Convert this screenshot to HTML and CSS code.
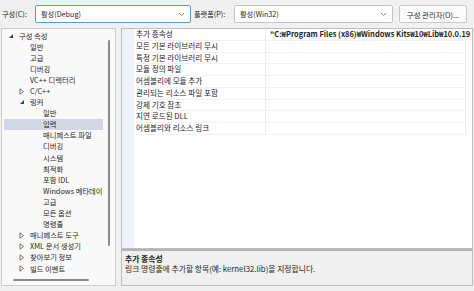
FILE: index.html
```html
<!DOCTYPE html>
<html>
    <head>
        <meta charset="utf-8">
        <link rel="stylesheet" href="styles.css">
        <title>속성 페이지</title>
    </head>
    <body>
        <div class="topbar">
            <span class="label cfg">구성(C):</span>
            <div class="combo focus combo-cfg">
                <span>활성(Debug)</span>
                <svg class="chev" width="7" height="5" viewBox="0 0 7 5"><path d="M1 1 L3.5 3.5 L6 1" fill="none" stroke="#777" stroke-width="0.9"/></svg>
            </div>
            <span class="label plat">플랫폼(P):</span>
            <div class="combo combo-plat">
                <span>활성(Win32)</span>
                <svg class="chev" width="7" height="5" viewBox="0 0 7 5"><path d="M1 1 L3.5 3.5 L6 1" fill="none" stroke="#777" stroke-width="0.9"/></svg>
            </div>
            <button class="btn">구성 관리자(O)...</button>
        </div>

        <div class="main">
            <div class="tree">
                <div class="item l0"><span class="arr"><svg width="6" height="6" viewBox="0 0 6 6"><polygon points="5,1 5,5 1,5" fill="#404040"/></svg></span>구성 속성</div>
                <div class="item l1"><span class="arr"></span>일반</div>
                <div class="item l1"><span class="arr"></span>고급</div>
                <div class="item l1"><span class="arr"></span>디버깅</div>
                <div class="item l1"><span class="arr"></span>VC++ 디렉터리</div>
                <div class="item l1"><span class="arr"><svg width="6" height="7" viewBox="0 0 6 7"><polygon points="1,0.8 4.6,3.5 1,6.2" fill="none" stroke="#555" stroke-width="0.8"/></svg></span>C/C++</div>
                <div class="item l1"><span class="arr"><svg width="6" height="6" viewBox="0 0 6 6"><polygon points="5,1 5,5 1,5" fill="#404040"/></svg></span>링커</div>
                <div class="item l2"><span class="arr"></span>일반</div>
                <div class="item l2 selected"><span class="arr"></span>입력</div>
                <div class="item l2"><span class="arr"></span>매니페스트 파일</div>
                <div class="item l2"><span class="arr"></span>디버깅</div>
                <div class="item l2"><span class="arr"></span>시스템</div>
                <div class="item l2"><span class="arr"></span>최적화</div>
                <div class="item l2"><span class="arr"></span>포함 IDL</div>
                <div class="item l2"><span class="arr"></span>Windows 메타데이</div>
                <div class="item l2"><span class="arr"></span>고급</div>
                <div class="item l2"><span class="arr"></span>모든 옵션</div>
                <div class="item l2"><span class="arr"></span>명령줄</div>
                <div class="item l1"><span class="arr"><svg width="6" height="7" viewBox="0 0 6 7"><polygon points="1,0.8 4.6,3.5 1,6.2" fill="none" stroke="#555" stroke-width="0.8"/></svg></span>매니페스트 도구</div>
                <div class="item l1"><span class="arr"><svg width="6" height="7" viewBox="0 0 6 7"><polygon points="1,0.8 4.6,3.5 1,6.2" fill="none" stroke="#555" stroke-width="0.8"/></svg></span>XML 문서 생성기</div>
                <div class="item l1"><span class="arr"><svg width="6" height="7" viewBox="0 0 6 7"><polygon points="1,0.8 4.6,3.5 1,6.2" fill="none" stroke="#555" stroke-width="0.8"/></svg></span>찾아보기 정보</div>
                <div class="item l1"><span class="arr"><svg width="6" height="7" viewBox="0 0 6 7"><polygon points="1,0.8 4.6,3.5 1,6.2" fill="none" stroke="#555" stroke-width="0.8"/></svg></span>빌드 이벤트</div>
                <div class="vscroll"></div>
                <div class="hscroll"></div>
            </div>

            <div class="right">
                <div class="grid">
                    <div class="margin"></div>
                    <div class="rows">
                        <div class="row first">
                            <div class="name">추가 종속성</div>
                            <div class="value bold">"C:₩Program Files (x86)₩Windows Kits₩10₩Lib₩10.0.19</div>
                        </div>
                        <div class="row"><div class="name">모든 기본 라이브러리 무시</div><div class="value"></div></div>
                        <div class="row"><div class="name">특정 기본 라이브러리 무시</div><div class="value"></div></div>
                        <div class="row"><div class="name">모듈 정의 파일</div><div class="value"></div></div>
                        <div class="row"><div class="name">어셈블리에 모듈 추가</div><div class="value"></div></div>
                        <div class="row"><div class="name">관리되는 리소스 파일 포함</div><div class="value"></div></div>
                        <div class="row"><div class="name">강제 기호 참조</div><div class="value"></div></div>
                        <div class="row"><div class="name">지연 로드된 DLL</div><div class="value"></div></div>
                        <div class="row"><div class="name">어셈블리와 리소스 링크</div><div class="value"></div></div>
                    </div>
                </div>
                <div class="desc">
                    <div class="desc-title">추가 종속성</div>
                    <div class="desc-text">링크 명령줄에 추가할 항목(예: kernel32.lib)을 지정합니다.</div>
                </div>
            </div>
        </div>
    </body>
</html>
```

FILE: styles.css
```css
body {
    margin: 0;
    background-color: #f0f0f0;
    color: #1e1e1e;
    font-family: "Noto Sans CJK KR", "Noto Sans", sans-serif;
    font-size: 7.2px;
    width: 474px;
    height: 291px;
    overflow: hidden;
}
.topbar {
    display: flex;
    align-items: center;
    height: 28px;
    padding-left: 2px;
    box-sizing: border-box;
}
.label {
    white-space: nowrap;
}
.label.cfg {
    width: 33px;
}
.label.plat {
    width: 40px;
}
.combo {
    display: flex;
    align-items: center;
    justify-content: space-between;
    height: 18px;
    box-sizing: border-box;
    padding: 0 5px 0 5px;
    background-color: #fff;
    border: 1px solid #c4c4c4;
    border-radius: 2px;
}
.combo.focus {
    border-color: #5b9bd5;
}
.combo-cfg {
    width: 156px;
    margin-right: 3px;
}
.combo-plat {
    width: 159px;
    margin-right: 6px;
}
.chev {
    display: block;
}
.btn {
    width: 68px;
    height: 18px;
    padding: 0;
    font-family: inherit;
    font-size: 7.4px;
    color: #1e1e1e;
    background-color: #fbfbfb;
    border: 1px solid #c9c9c9;
    border-radius: 2px;
}
.main {
    display: flex;
    height: 258px;
}
.tree {
    position: relative;
    width: 115px;
    margin-left: 1px;
    box-sizing: border-box;
    padding-top: 1px;
    background-color: #f9f9f9;
    border: 1px solid #cdcdcd;
    overflow: hidden;
    font-size: 7.3px;
}
.item {
    display: flex;
    align-items: center;
    height: 11.1px;
    white-space: nowrap;
    margin-right: 12px;
}
.item .arr {
    display: inline-flex;
    align-items: center;
    width: 11px;
    flex: none;
}
.item.l0 {
    padding-left: 6px;
}
.item.l1 {
    padding-left: 17px;
}
.item.l2 {
    padding-left: 30px;
}
.item.selected {
    background-color: #d3d7e3;
    margin-left: 2px;
    padding-left: 28px;
}
.vscroll {
    position: absolute;
    left: 106px;
    top: 11px;
    width: 2px;
    height: 206px;
    background-color: #8a8a8a;
    border-radius: 1px;
}
.hscroll {
    position: absolute;
    left: 11px;
    top: 250px;
    width: 76px;
    height: 1.5px;
    background-color: #8a8a8a;
    border-radius: 1px;
}
.right {
    display: flex;
    flex-direction: column;
    margin-left: 5px;
    width: 352px;
}
.grid {
    display: flex;
    flex: 1;
    background-color: #fff;
    border: 1px solid #bdbdbd;
    overflow: hidden;
    font-size: 7.6px;
}
.margin {
    width: 12px;
    flex: none;
    background-color: #eef2f9;
}
.rows {
    width: 332px;
    flex: none;
}
.row {
    display: flex;
    height: 11.75px;
    box-sizing: border-box;
    border-bottom: 1px solid #f1f1f1;
    border-right: 1px solid #ececec;
    line-height: 10.75px;
    white-space: nowrap;
}
.row.first {
    border-right: none;
}
.name {
    width: 132px;
    flex: none;
    padding-left: 2px;
    box-sizing: border-box;
    border-right: 1px solid #ececec;
}
.value {
    padding-left: 4px;
}
.bold {
    font-weight: bold;
    font-size: 7.45px;
}
.desc {
    height: 37px;
    box-sizing: border-box;
    padding: 3px 3px;
    background-color: #f0f0f0;
    border: 1px solid #bdbdbd;
    border-top: 2px solid #b5b5b5;
    line-height: 9.5px;
    font-size: 7.8px;
}
.desc-title {
    font-weight: bold;
}
```
